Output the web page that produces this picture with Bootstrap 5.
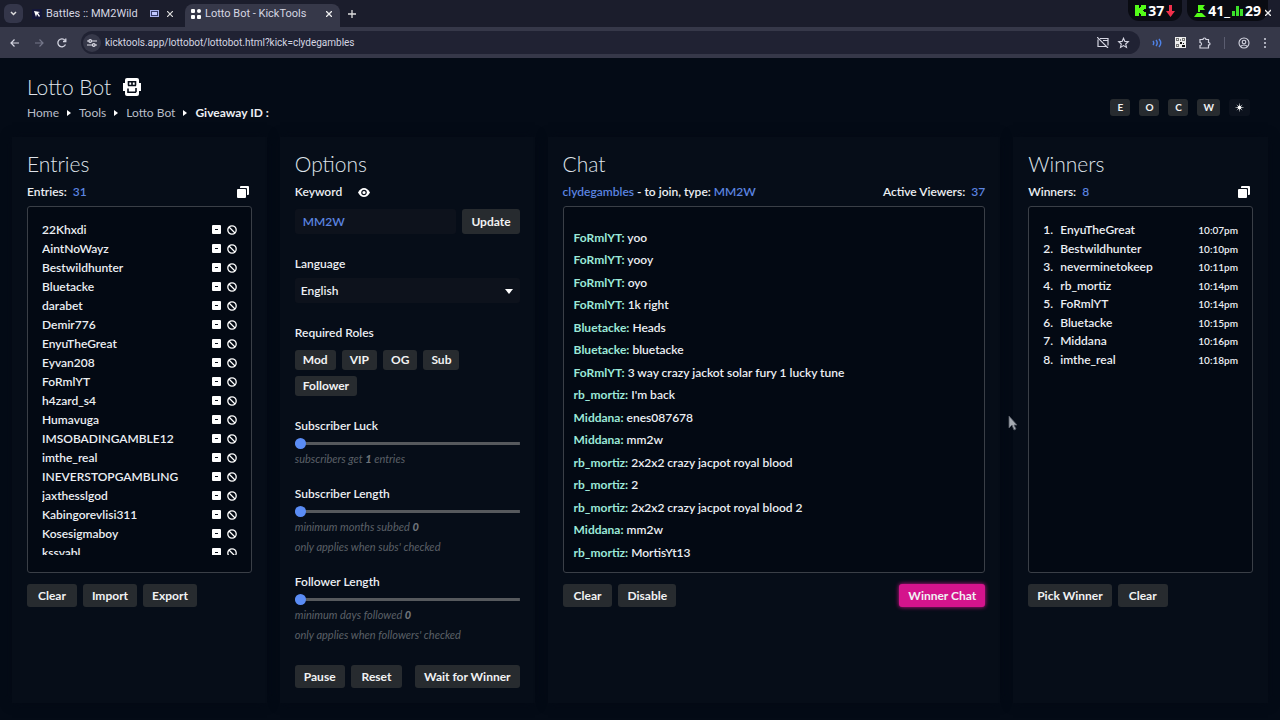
<!DOCTYPE html>
<html lang="en" data-bs-theme="dark">
<head>
<meta charset="utf-8">
<meta name="viewport" content="width=device-width, initial-scale=1">
<title>Lotto Bot - KickTools</title>
<link href="https://cdn.jsdelivr.net/npm/bootstrap@5.3.0/dist/css/bootstrap.min.css" rel="stylesheet">
<style>
:root { --page: #040b16; --panel: #060d18; --well: #030913; --key: #272b2f; --blue: #5b84e0; --mint: #9be8d8; }
body { background: var(--page); color: #eceff3; font-family: Lato, sans-serif; font-size: 12px; font-weight: 600; line-height: 20px; min-height: 100vh; overflow-x: hidden; }
svg { display: block; flex: none; }
button { font-family: inherit; }
.icon-btn { background: none; border: 0; padding: 0; color: inherit; display: block; flex: none; }
/* browser chrome */
.chrome { font-family: Roboto, sans-serif; font-size: 11px; font-weight: 400; color: #d5d6e2; }
.tabstrip { background: #1b1d2c; height: 27px; padding-left: 4px; }
.tab-search { width: 19px; height: 19px; background: #34364a; border-radius: 6px; display: grid; place-items: center; margin-top: 4px; }
.tab-item { height: 27px; }
.tab-first { width: 162px; padding: 0 12px 0 9px; }
.tab-open { width: 155px; background: #363849; border-radius: 8px 8px 0 0; margin-top: 4px; height: 23px; padding: 0 8px 4px 6px; }
.toolbar { background: #363849; height: 31px; }
.nav-keys { width: 81px; padding: 0 14px 0 9px; }
.address { background: #202233; border-radius: 12px; height: 23px; padding: 0 10px 0 2px; }
.address input { background: none; border: 0; color: #d5d6e2; padding: 0; outline: 0; font-size: 10px; }
.site-info { width: 18px; height: 18px; border-radius: 9px; background: #363849; display: grid; place-items: center; }
.tool-icons { width: 140px; padding: 0 13px 0 12px; }
.overlay-stats { top: 0; right: 12px; gap: 5px; font: 700 14px/21px "Noto Sans", sans-serif; color: #fff; }
.stat-pill { background: #090b12; border-radius: 0 0 11px 11px; height: 21px; padding: 0 7px; gap: 2px; }
.win-close { top: 8px; right: 9px; }
/* page head */
.page-head { height: 81px; padding: 17px 30px 0 27px; }
h1, h2 { font-size: 21px; line-height: 24px; font-weight: 300; color: #dfe3ea; margin: 0; }
.crumbs { gap: 8px; font-weight: 400; }
.crumbs a { color: #b9bec8; text-decoration: none; }
.key { background: var(--key); color: #f1f2f3; border: 0; border-radius: 3px; font-weight: 700; font-size: 12px; line-height: 21px; padding: 1px 9px; white-space: nowrap; }
.key-wide { padding: 1px 11px; }
.key-role { line-height: 18px; padding: 1px 8px; }
.key-sq { font-size: 10px; line-height: 15px; padding: 1px 6px; min-width: 20px; }
.key-quiet { background: #0c121d; }
.key-hot { background: #d4148c; box-shadow: 0 0 4px #d4148c; }
.keys { gap: 6px; }
.head-keys { gap: 9px; }
/* columns */
.board { display: grid; grid-template-columns: 225fr 225fr 423fr 225fr; column-gap: 43px; padding: 13px 27px 26px; }
.board > section { background: var(--panel); box-shadow: 0 0 0 15px var(--panel), 0 0 10px 15px #040a15; min-width: 0; }
.subline { height: 20px; margin: 6px 0 4px; }
.count { color: var(--blue); margin-left: 3px; }
.hl { color: var(--blue); }
.copy-btn { margin-right: 3px; }
.well { background: var(--well); border: 1px solid #3a3f47; border-radius: 3px; height: 367px; }
.entry-list { height: 335px; margin: 13px 14px 0; overflow: hidden; }
.entry-list li { height: 19px; line-height: 19px; gap: 6px; }
.winner-list { padding: 14px 14px 0; }
.winner-list li { height: 18px; line-height: 18px; }
.winner-list li:nth-child(odd) { margin-bottom: 1px; }
.winner-list time { font-size: 10px; }
.rank { width: 17px; }
.chat-log { padding: 21px 10px 0; }
.chat-log p { margin: 0 0 2px; height: 20px; }
.chat-log p:nth-child(even) { margin-bottom: 3px; }
.chat-log b { color: var(--mint); font-weight: 700; }
.actions { margin-top: 11px; }
.f-label { display: block; line-height: 20px; }
.block-gap { margin-top: 20px; }
.slider-gap { margin-top: 15px; }
.field-row { margin-top: 7px; }
.field { background: #0d121c; border: 0; border-radius: 3px; height: 25px; font-size: 12px; font-weight: 600; padding: 0 8px; min-width: 0; }
.field-kw { color: var(--blue); }
.field-lang { color: #eceff3; width: 100%; appearance: none; padding: 0 6px; }
.caret { right: 7px; top: 11px; pointer-events: none; }
.hint { color: #5b6067; font-style: italic; font-weight: 400; font-size: 11px; line-height: 20px; margin: 0; }
.hint b { font-weight: 900; color: #6e7379; }
.slider { display: block; width: 100%; height: 12px; margin: 1px 0 0; appearance: none; background: linear-gradient(#56595d, #56595d) center / 100% 3px no-repeat; }
.slider::-webkit-slider-thumb { appearance: none; width: 11px; height: 11px; border-radius: 50%; background: #5a8cf5; }
.pointer { left: 1008px; top: 415px; z-index: 3; }
</style>
</head>
<body>
<div class="chrome position-relative">
  <div class="tabstrip d-flex">
    <button class="icon-btn tab-search" aria-label="Search tabs"><svg width="7" height="5" fill="none" stroke="#ddd" stroke-width="1.5"><path d="M1 1l2.500 2.500L6 1"/></svg></button>
    <div class="tab-item tab-first d-flex align-items-center">
      <svg width="10" height="10" viewBox="0 0 10 10"><path fill="#14163a" d="M0 0h10v10H0z"/><path fill="#fff" d="M2 2l6 1-2 1 2 3-1 1-2-3-1 3z"/></svg>
      <span class="ms-1 flex-grow-1 text-nowrap">Battles :: MM2Wild</span>
      <svg width="9" height="7"><path fill="#a9b2ee" d="M0 0h9v7H0z"/><path fill="#343a68" d="M1 1h7v5H1z"/><path fill="#c1c8ff" d="M2 2h5v3H2z"/></svg>
      <button class="icon-btn ms-2" aria-label="Close"><svg width="6" height="6" stroke="#ddd" stroke-width="1.2"><path d="M0 0l6 6M6 0l-6 6"/></svg></button>
    </div>
    <div class="tab-open d-flex align-items-center">
      <svg width="10" height="10" fill="#fff"><rect width="4" height="4" rx="1"/><rect x="6" width="4" height="4" rx="2"/><rect y="6" width="4" height="4" rx="1"/><rect x="6" y="6" width="4" height="4" rx="1"/></svg>
      <span class="ms-1 flex-grow-1 text-nowrap">Lotto Bot - KickTools</span>
      <button class="icon-btn" aria-label="Close"><svg width="6" height="6" stroke="#eee" stroke-width="1.3"><path d="M0 0l6 6M6 0l-6 6"/></svg></button>
    </div>
    <button class="icon-btn ms-2" aria-label="New tab"><svg width="8" height="8" stroke="#ddd" stroke-width="1.3"><path d="M4 0v8M0 4h8"/></svg></button>
  </div>
  <div class="toolbar d-flex align-items-center">
    <div class="nav-keys d-flex justify-content-between align-items-center">
      <button class="icon-btn" aria-label="Back"><svg width="12" height="10" fill="none" stroke="#d5d6e2" stroke-width="1.2"><path d="M10 5H2M5.500 1.500L2 5l3.500 3.500"/></svg></button>
      <button class="icon-btn" aria-label="Forward"><svg width="12" height="10" fill="none" stroke="#75778a" stroke-width="1.2"><path d="M2 5h8M6.500 1.500L10 5 6.500 8.500"/></svg></button>
      <button class="icon-btn" aria-label="Reload"><svg width="10" height="10" fill="none" stroke="#d5d6e2" stroke-width="1.300"><path d="M8.500 6.500A4 4 0 1 1 8 2.300M8.800 .5v3H6"/></svg></button>
    </div>
    <div class="address d-flex align-items-center flex-grow-1">
      <span class="site-info"><svg width="10" height="8" fill="none" stroke="#e0e0ea" stroke-width="1.200"><path d="M0 2h2M5 2h5M0 6h5M8 6h2"/><circle cx="3.200" cy="2" r="1.300"/><circle cx="6.800" cy="6" r="1.300"/></svg></span>
      <input class="flex-grow-1 ms-1" aria-label="Address" value="kicktools.app/lottobot/lottobot.html?kick=clydegambles">
      <svg class="me-2" width="12" height="11" fill="none" stroke="#d5d6e2" stroke-width="1.200"><path d="M3 1.500h8v7M9 9.500H1v-7M6 3.500h5M0 0l11 11"/></svg>
      <svg width="13" height="12" viewBox="0 0 12 12" fill="none" stroke="#d5d6e2" stroke-width="1.100"><path d="M6 1.200l1.400 3.200 3.400.3-2.600 2.300.8 3.400-3-1.800-3 1.800.8-3.400L1.200 4.700l3.400-.3z"/></svg>
    </div>
    <div class="tool-icons d-flex justify-content-between align-items-center">
      <svg width="10" height="10" fill="none" stroke="#4f83e8" stroke-width="1.400"><path d="M1 3q1.500 2 0 4M4 2q2.500 3 0 6M7 1q3.500 4 0 8"/></svg>
      <svg width="11" height="11"><path fill="#eee" d="M0 0h11v11H0z"/><path fill="#777" d="M1 1h3v3H1zM7 1h3v3H7zM1 7h3v3H1zM5 2h1v2H5z"/><path fill="#111" d="M5 5h2v2H5zM8 6h1v1H8zM7 8h3v2H7z"/><path fill="#eee" d="M2 2h1v1H2zM8 2h1v1H8zM2 8h1v1H2z"/></svg>
      <svg width="12" height="12" fill="none" stroke="#d5d6e2" stroke-width="1.200"><path d="M1 2.500h3q0-1.500 1.500-1.500T7 2.500h2.500v3q1.500 0 1.500 1.300T9.500 8v3H1V8.500q1.500 0 1.500-1.500T1 5.500z"/></svg>
      <svg width="1" height="12" fill="#5b5d70"><path d="M0 0h1v12H0z"/></svg>
      <svg width="12" height="12" fill="none" stroke="#d5d6e2" stroke-width="1.100"><circle cx="6" cy="6" r="5"/><circle cx="6" cy="5" r="1.800"/><path d="M2.500 9.500q3.500-3 7 0"/></svg>
      <svg width="4" height="12" fill="#d5d6e2"><circle cx="2" cy="2" r="1"/><circle cx="2" cy="6" r="1"/><circle cx="2" cy="10" r="1"/></svg>
    </div>
  </div>
  <div class="overlay-stats position-absolute d-flex align-items-start">
    <div class="stat-pill d-flex align-items-center"><svg width="11" height="11" fill="#53fc18"><path d="M0 0h4v3h1V2h1V0h5v4H9v1H8v1h1v1h2v4H6V9H5V8H4v3H0z"/></svg><span>37</span><svg width="9" height="12" fill="#f0304a"><path d="M3 0h3v6h3l-4.500 6L0 6h3z"/></svg></div>
    <div class="stat-pill d-flex align-items-center"><svg width="12" height="12" fill="#53fc18"><path d="M0 12l3-4h5l4 4zM4 0h7L9 2.500 11 5H6v2H4z"/></svg><span>41_</span><svg width="11" height="10" fill="#3be02a"><path d="M0 5h3v5H0zM4 0h3v10H4zM8 3h3v7H8z"/></svg><span>29</span></div>
  </div>
  <button class="icon-btn win-close position-absolute" aria-label="Close window"><svg width="6" height="8" fill="none" stroke="#eee" stroke-width="1.300"><path d="M0 2l6 6M6 2l-6 6"/></svg></button>
</div>

<header class="page-head d-flex justify-content-between">
  <div>
    <div class="d-flex align-items-center gap-2">
      <h1>Lotto Bot</h1>
      <svg class="ms-1" width="18" height="18" viewBox="0 0 18 18"><rect x="2" y="0" width="14" height="18" rx="2" fill="#fff"/><path fill="#fff" d="M0 5h18v8H0z"/><path fill="none" stroke="#060d18" stroke-width="1.600" d="M5 3.800h8M5 7.500h8M9 3.800v3.700M5.500 3v4.500M12.500 3v4.500M5 10.500v3.700h8M13 10v4.200"/></svg>
    </div>
    <nav class="crumbs d-flex align-items-center mt-1" aria-label="Breadcrumb">
      <a href="#">Home</a><svg width="4" height="6" fill="#fff"><path d="M0 0l4 3-4 3z"/></svg>
      <a href="#">Tools</a><svg width="4" height="6" fill="#fff"><path d="M0 0l4 3-4 3z"/></svg>
      <a href="#">Lotto Bot</a><svg width="4" height="6" fill="#fff"><path d="M0 0l4 3-4 3z"/></svg>
      <strong>Giveaway ID :</strong>
    </nav>
  </div>
  <div class="head-keys d-flex align-self-center align-items-center">
    <button class="key key-sq">E</button><button class="key key-sq">O</button><button class="key key-sq">C</button><button class="key key-sq">W</button>
    <button class="key key-sq key-quiet" aria-label="Theme"><svg width="9" height="15" viewBox="0 -3 9 15" stroke="#fff"><circle cx="4.500" cy="4.500" r="1.500" fill="#fff"/><path d="M4.500 .5v8M.5 4.500h8M1.800 1.800l5.400 5.400M7.200 1.800L1.800 7.200" stroke-width=".5"/></svg></button>
  </div>
</header>

<main class="board">
  <section>
    <h2>Entries</h2>
    <div class="subline d-flex justify-content-between align-items-center"><span>Entries: <span class="count">31</span></span><button class="icon-btn copy-btn" aria-label="Copy entries"><svg width="12" height="12" fill="#fff"><path d="M3 2V1q0-1 1-1h7q1 0 1 1v7q0 1-1 1h-1V3q0-1-1-1z"/><rect y="3" width="9" height="9" rx="1"/></svg></button></div>
    <div class="well"><ul class="entry-list list-unstyled" id="entries"></ul></div>
    <div class="actions keys d-flex"><button class="key key-wide">Clear</button><button class="key">Import</button><button class="key">Export</button></div>
  </section>

  <section>
    <h2>Options</h2>
    <div class="subline d-flex align-items-center gap-3"><label for="kw">Keyword</label><button class="icon-btn" aria-label="Show keyword"><svg width="12" height="9" viewBox="0 0 12 9"><path fill="#fff" d="M0 4.500Q2.500 0 6 0t6 4.500Q9.500 9 6 9T0 4.500z"/><circle cx="6" cy="4.500" r="2.200" fill="none" stroke="#060d18" stroke-width="1.200"/></svg></button></div>
    <div class="field-row keys d-flex"><input id="kw" class="field field-kw flex-grow-1" value="MM2W"><button class="key">Update</button></div>
    <label class="f-label block-gap" for="lang">Language</label>
    <div class="position-relative mt-1"><select id="lang" class="field field-lang"><option>English</option></select><svg class="caret position-absolute" width="8" height="5" fill="#fff"><path d="M0 0h8L4 5z"/></svg></div>
    <span class="f-label block-gap">Required Roles</span>
    <div class="keys d-flex flex-wrap field-row"><button class="key key-role">Mod</button><button class="key key-role">VIP</button><button class="key key-role">OG</button><button class="key key-role">Sub</button><button class="key key-role">Follower</button></div>
    <label class="f-label block-gap" for="luck">Subscriber Luck</label><input id="luck" class="slider" type="range" min="1" max="10" value="1">
    <p class="hint">subscribers get <b>1</b> entries</p>
    <label class="f-label slider-gap" for="sublen">Subscriber Length</label><input id="sublen" class="slider" type="range" value="0">
    <p class="hint">minimum months subbed <b>0</b></p><p class="hint">only applies when subs' checked</p>
    <label class="f-label slider-gap" for="follen">Follower Length</label><input id="follen" class="slider" type="range" value="0">
    <p class="hint">minimum days followed <b>0</b></p><p class="hint">only applies when followers' checked</p>
    <div class="keys d-flex block-gap"><button class="key">Pause</button><button class="key key-wide">Reset</button><button class="key ms-auto">Wait for Winner</button></div>
  </section>

  <section>
    <h2>Chat</h2>
    <div class="subline d-flex justify-content-between"><span><span class="hl">clydegambles</span> - to join, type: <span class="hl">MM2W</span></span><span>Active Viewers: <span class="count">37</span></span></div>
    <div class="well chat-log" id="chat"></div>
    <div class="actions keys d-flex"><button class="key key-wide">Clear</button><button class="key">Disable</button><button class="key key-hot ms-auto">Winner Chat</button></div>
  </section>

  <section>
    <h2>Winners</h2>
    <div class="subline d-flex justify-content-between align-items-center"><span>Winners: <span class="count">8</span></span><button class="icon-btn copy-btn" aria-label="Copy winners"><svg width="12" height="12" fill="#fff"><path d="M3 2V1q0-1 1-1h7q1 0 1 1v7q0 1-1 1h-1V3q0-1-1-1z"/><rect y="3" width="9" height="9" rx="1"/></svg></button></div>
    <div class="well"><ol class="winner-list list-unstyled" id="winners"></ol></div>
    <div class="actions keys d-flex"><button class="key">Pick Winner</button><button class="key key-wide">Clear</button></div>
  </section>
</main>
<svg class="pointer position-absolute" width="10" height="16" fill="#a6abb2" stroke="#555b64" stroke-width=".8"><path d="M1 1v12l3-3 2 5 2-1-2-4h3z"/></svg>

<script src="https://cdn.jsdelivr.net/npm/bootstrap@5.3.0/dist/js/bootstrap.bundle.min.js"></script>
<script>
const entries = "22Khxdi AintNoWayz Bestwildhunter Bluetacke darabet Demir776 EnyuTheGreat Eyvan208 FoRmlYT h4zard_s4 Humavuga IMSOBADINGAMBLE12 imthe_real INEVERSTOPGAMBLING jaxthesslgod Kabingorevlisi311 Kosesigmaboy kssyabl".split(" ");
document.getElementById("entries").innerHTML = entries.map(n => `<li class="d-flex align-items-center"><span class="flex-grow-1">${n}</span>
<button class="icon-btn" aria-label="Remove ${n}"><svg width="9" height="9"><rect width="9" height="9" rx="1" fill="#fff"/><path d="M3 4.500h3" stroke="#060d18"/></svg></button>
<button class="icon-btn" aria-label="Ban ${n}"><svg width="10" height="10" fill="none" stroke="#fff" stroke-width="1.300"><circle cx="5" cy="5" r="4.200"/><path d="M2 2l6 6"/></svg></button></li>`).join("");
const chat = [["FoRmlYT","yoo"],["FoRmlYT","yooy"],["FoRmlYT","oyo"],["FoRmlYT","1k right"],["Bluetacke","Heads"],["Bluetacke","bluetacke"],["FoRmlYT","3 way crazy jackot solar fury 1 lucky tune"],["rb_mortiz","I'm back"],["Middana","enes087678"],["Middana","mm2w"],["rb_mortiz","2x2x2 crazy jacpot royal blood"],["rb_mortiz","2"],["rb_mortiz","2x2x2 crazy jacpot royal blood 2"],["Middana","mm2w"],["rb_mortiz","MortisYt13"]];
document.getElementById("chat").innerHTML = chat.map(([n, t]) => `<p><b>${n}:</b> ${t}</p>`).join("");
const winners = [["EnyuTheGreat","10:07pm"],["Bestwildhunter","10:10pm"],["neverminetokeep","10:11pm"],["rb_mortiz","10:14pm"],["FoRmlYT","10:14pm"],["Bluetacke","10:15pm"],["Middana","10:16pm"],["imthe_real","10:18pm"]];
document.getElementById("winners").innerHTML = winners.map(([n, t], i) => `<li class="d-flex"><span class="rank">${i + 1}.</span><span class="flex-grow-1">${n}</span><time>${t}</time></li>`).join("");
</script>
</body>
</html>
